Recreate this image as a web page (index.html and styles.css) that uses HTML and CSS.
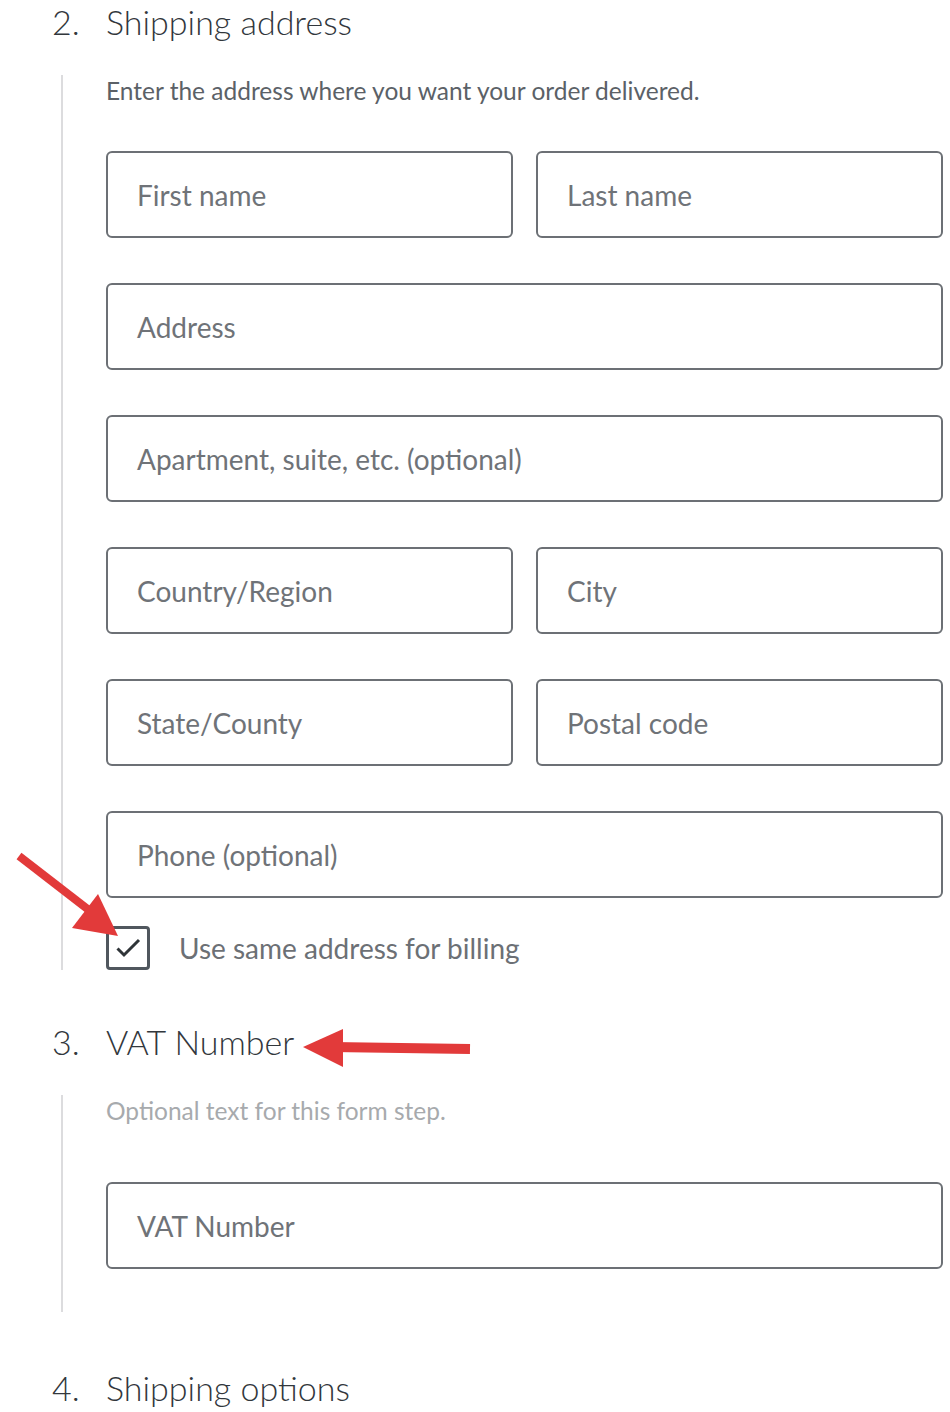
FILE: index.html
```html
<!DOCTYPE html>
<html lang="en">
<head>
  <meta charset="UTF-8">
  <title>Checkout</title>
  <link rel="stylesheet" href="styles.css">
</head>
<body>
  <main class="checkout">
    <section class="step">
      <h2 class="step-title"><span class="num">2.</span>Shipping address</h2>
      <div class="step-body">
        <p class="step-desc">Enter the address where you want your order delivered.</p>
        <div class="row">
          <div class="field">First name</div>
          <div class="field">Last name</div>
        </div>
        <div class="row"><div class="field">Address</div></div>
        <div class="row"><div class="field">Apartment, suite, etc. (optional)</div></div>
        <div class="row">
          <div class="field">Country/Region</div>
          <div class="field">City</div>
        </div>
        <div class="row">
          <div class="field">State/County</div>
          <div class="field">Postal code</div>
        </div>
        <div class="row"><div class="field">Phone (optional)</div></div>
        <label class="check">
          <span class="box">
            <svg width="30" height="30" viewBox="0 0 30 30"><path d="M4.5 15.5l6.5 6.5L26 7" fill="none" stroke="#2f3438" stroke-width="3"/></svg>
          </span>
          Use same address for billing
        </label>
      </div>
    </section>

    <section class="step">
      <h2 class="step-title"><span class="num">3.</span>VAT Number</h2>
      <div class="step-body padded">
        <p class="step-desc light">Optional text for this form step.</p>
        <div class="row last"><div class="field">VAT Number</div></div>
      </div>
    </section>

    <section class="step">
      <h2 class="step-title"><span class="num">4.</span>Shipping options</h2>
    </section>

    <svg class="arrow arrow-1" width="120" height="110" viewBox="0 0 120 110">
      <line x1="3" y1="4" x2="78" y2="62" stroke="#e23a3a" stroke-width="8"/>
      <polygon points="102,84 56,76 82,42" fill="#e23a3a"/>
    </svg>
    <svg class="arrow arrow-2" width="172" height="44" viewBox="0 0 172 44">
      <line x1="30" y1="20" x2="168" y2="22" stroke="#e23a3a" stroke-width="10"/>
      <polygon points="1,20 41,2 41,40" fill="#e23a3a"/>
    </svg>
  </main>
</body>
</html>
```

FILE: styles.css
```css
body { margin: 0; background: #fff; font-family: "Lato", "Open Sans", sans-serif; color: #2f3438; }
.checkout { position: relative; width: 950px; padding-left: 52px; box-sizing: border-box; }
.step-title { margin: 0; font-weight: 300; font-size: 34px; line-height: 44px; color: #32373c; display: flex; }
.num { width: 54px; }
.step-body { margin: 31px 0 0 9px; border-left: 2px solid #dcdcde; padding-left: 43px; }
.step-body.padded { padding-bottom: 43px; }
.step-desc { margin: 0 0 44px; font-size: 24.5px; line-height: 32px; color: #5b6167; }
.step-desc.light { color: #a7aaad; margin-bottom: 55px; }
.row { display: flex; gap: 23px; margin-bottom: 45px; width: 837px; }
.row.last { margin-bottom: 0; }
.field { flex: 1; height: 87px; box-sizing: border-box; border: 2px solid #6c7075; border-radius: 6px; padding: 0 29px; display: flex; align-items: center; font-size: 28px; color: #6f7378; }
.check { display: flex; align-items: center; gap: 29px; font-size: 28px; color: #6c7075; margin-top: -17px; }
.box { width: 44px; height: 44px; box-sizing: border-box; border: 3px solid #50575e; border-radius: 4px; display: flex; align-items: center; justify-content: center; }
.step + .step { margin-top: 50px; }
.step:last-of-type { margin-top: 54px; }
.arrow { position: absolute; }
.arrow-1 { left: 16px; top: 852px; }
.arrow-2 { left: 302px; top: 1027px; }
```
